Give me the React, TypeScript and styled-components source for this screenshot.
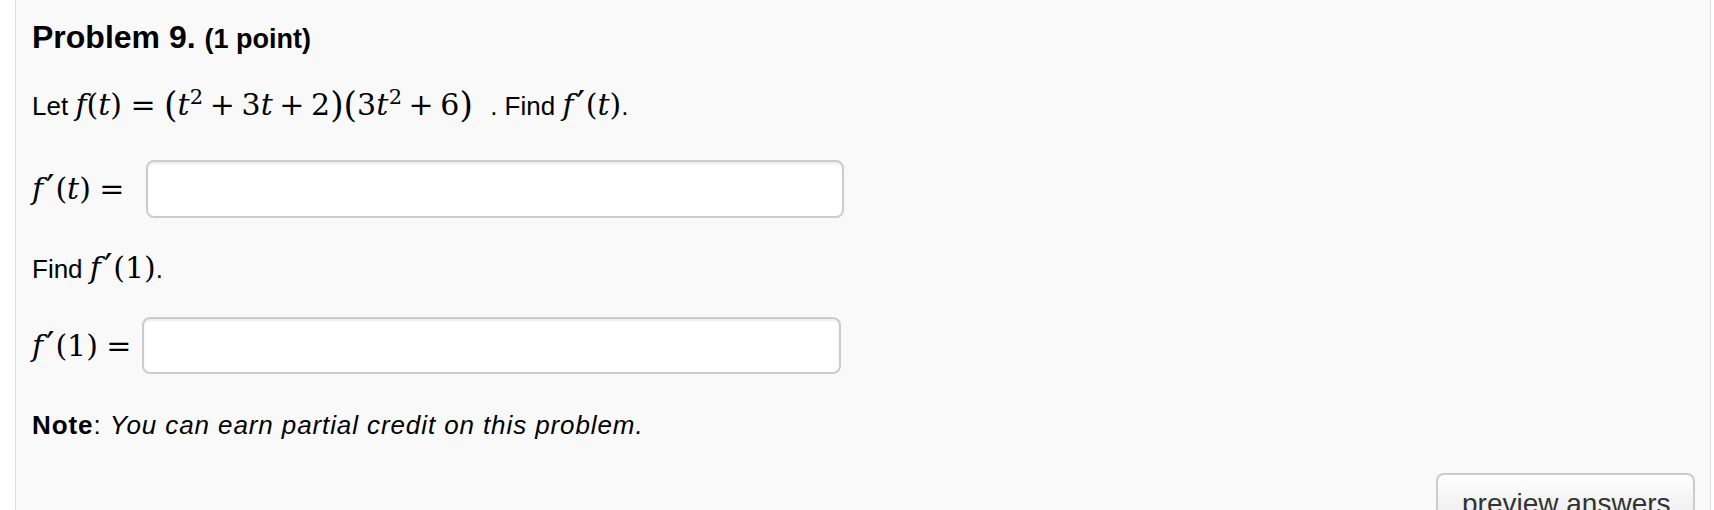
import React from "react";
import { createGlobalStyle, styled } from "styled-components";

const GlobalStyle = createGlobalStyle`
  html, body {
    margin: 0;
    padding: 0;
    overflow: hidden;
    background: #ffffff;
  }
  body {
    font-family: "Liberation Sans", Arial, sans-serif;
    color: #000000;
  }
`;

const App = (): React.ReactNode => {
  return (
    <>
      <GlobalStyle />
      <Panel>
        <Title>
          Problem 9. <Points>(1 point)</Points>
        </Title>
        <Paragraph $gap={27}>
          Let{" "}
          <Math $trail={10}>
            <Mi>f</Mi>
            <Mn>(</Mn>
            <Mi>t</Mi>
            <Mn>)</Mn>
            <Mo $space="rel">=</Mo>
            <BigParen>(</BigParen>
            <Mi>t</Mi>
            <Sup>2</Sup>
            <Mo $space="bin">+</Mo>
            <Mn>3</Mn>
            <Mi>t</Mi>
            <Mo $space="bin">+</Mo>
            <Mn>2</Mn>
            <BigParen>)</BigParen>
            <BigParen>(</BigParen>
            <Mn>3</Mn>
            <Mi>t</Mi>
            <Sup>2</Sup>
            <Mo $space="bin">+</Mo>
            <Mn>6</Mn>
            <BigParen>)</BigParen>
          </Math>{" "}
          . Find{" "}
          <Math>
            <Mi>f</Mi>
            <Prime>′</Prime>
            <Mn>(</Mn>
            <Mi>t</Mi>
            <Mn>)</Mn>
          </Math>
          .
        </Paragraph>
        <AnswerRow $gap={34}>
          <AnswerLabel $width={114}>
            <Math>
              <Mi>f</Mi>
              <Prime>′</Prime>
              <Mn>(</Mn>
              <Mi>t</Mi>
              <Mn>)</Mn>
              <Mo $space="rel">=</Mo>
            </Math>
          </AnswerLabel>
          <AnswerInput type="text" $width={698} $height={58} />
        </AnswerRow>
        <Paragraph $gap={31}>
          Find{" "}
          <Math>
            <Mi>f</Mi>
            <Prime>′</Prime>
            <Mn>(1)</Mn>
          </Math>
          .
        </Paragraph>
        <AnswerRow $gap={28}>
          <AnswerLabel $width={110}>
            <Math>
              <Mi>f</Mi>
              <Prime>′</Prime>
              <Mn>(1)</Mn>
              <Mo $space="rel">=</Mo>
            </Math>
          </AnswerLabel>
          <AnswerInput type="text" $width={699} $height={57} />
        </AnswerRow>
        <NoteLine $gap={31}>
          <strong>Note</strong>: <em>You can earn partial credit on this problem.</em>
        </NoteLine>
        <ButtonRow>
          <PreviewButton type="button">preview answers</PreviewButton>
        </ButtonRow>
      </Panel>
    </>
  );
};

const Panel = styled.div`
  box-sizing: border-box;
  height: 510px;
  margin: 0 3px 0 15px;
  padding: 17px 15px 0 16px;
  background: #f9f9f9;
  border-left: 1px solid #dddddd;
  border-right: 1px solid #dddddd;
`;
const Title = styled.h3`
  margin: 0;
  font-size: 32px;
  line-height: 40px;
  font-weight: bold;
`;
const Points = styled.span`
  font-size: 27px;
`;
const Paragraph = styled.div<{ $gap: number }>`
  margin-top: ${({ $gap }) => $gap}px;
  font-size: 26px;
  line-height: 40px;
  white-space: nowrap;
`;
const NoteLine = styled(Paragraph)`
  letter-spacing: 0.9px;
`;
const Math = styled.span<{ $trail?: number }>`
  margin-right: ${({ $trail }) => $trail ?? 0}px;
  font-family: "DejaVu Serif", "Liberation Serif", serif;
  font-size: 30px;
  line-height: 1;
  letter-spacing: 0;
  white-space: nowrap;
`;
const Mi = styled.span`
  font-style: italic;
`;
const Mn = styled.span`
  font-style: normal;
`;
const Mo = styled.span<{ $space?: "rel" | "bin" }>`
  margin: 0 ${({ $space }) => ($space === "rel" ? "0.28em" : $space === "bin" ? "0.22em" : "0")};
`;
const Prime = styled.span`
  display: inline-block;
  font-style: normal;
  font-size: 1.25em;
  line-height: 1;
  margin: 0 0.02em 0 0.08em;
  vertical-align: -0.05em;
`;
const Sup = styled.sup`
  font-size: 0.7em;
  line-height: 0;
  vertical-align: 0.55em;
  margin-left: 0.02em;
`;
const BigParen = styled.span`
  display: inline-block;
  font-size: 1.15em;
  line-height: 1;
  vertical-align: -0.04em;
`;
const AnswerRow = styled.div<{ $gap: number }>`
  display: flex;
  align-items: center;
  margin-top: ${({ $gap }) => $gap}px;
  font-size: 26px;
  line-height: 40px;
`;
const AnswerLabel = styled.span<{ $width: number }>`
  flex: none;
  width: ${({ $width }) => $width}px;
  padding-top: 2px;
  white-space: nowrap;
`;
const AnswerInput = styled.input<{ $width: number; $height: number }>`
  box-sizing: border-box;
  flex: none;
  width: ${({ $width }) => $width}px;
  height: ${({ $height }) => $height}px;
  margin: 0;
  padding: 8px 12px;
  background: #ffffff;
  border: 2px solid #cccccc;
  border-radius: 8px;
  box-shadow: inset 0 2px 2px rgba(0, 0, 0, 0.075);
  font-family: "Liberation Sans", Arial, sans-serif;
  font-size: 26px;
  outline: none;
`;
const ButtonRow = styled.div`
  display: flex;
  justify-content: flex-end;
  margin-top: 28px;
`;
const PreviewButton = styled.button`
  box-sizing: border-box;
  width: 259px;
  height: 62px;
  padding: 8px 24px;
  background: linear-gradient(#ffffff, #e6e6e6);
  border: 2px solid #cccccc;
  border-bottom-color: #b3b3b3;
  border-radius: 8px;
  color: #333333;
  font-family: "Liberation Sans", Arial, sans-serif;
  font-size: 28px;
  line-height: 40px;
  white-space: nowrap;
`;

export default App;
